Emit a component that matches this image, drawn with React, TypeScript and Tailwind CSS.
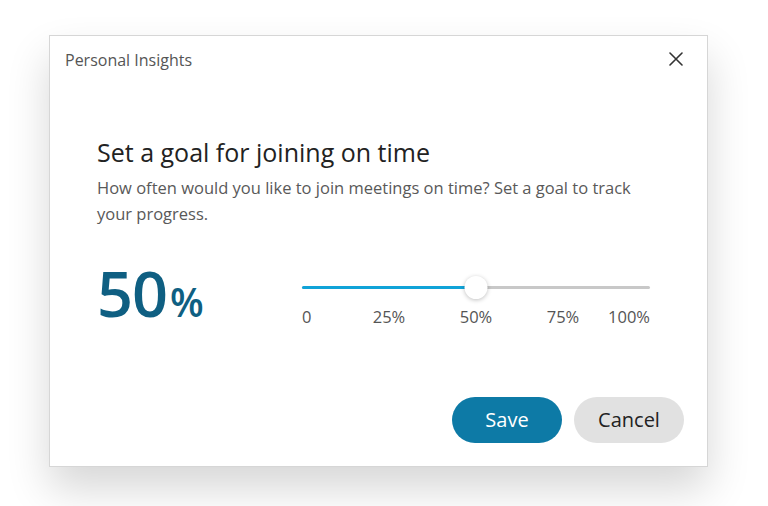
import React from "react";

export default function App() {
  const font = { fontFamily: '"Open Sans", "Noto Sans", sans-serif' };
  const ticks = [
    { label: "0", pos: "left-0", tx: "" },
    { label: "25%", pos: "left-[25%]", tx: "-translate-x-1/2" },
    { label: "50%", pos: "left-[50%]", tx: "-translate-x-1/2" },
    { label: "75%", pos: "left-[75%]", tx: "-translate-x-1/2" },
    { label: "100%", pos: "right-0", tx: "" },
  ];
  return (
    <div className="w-[768px] h-[506px] bg-white overflow-hidden pl-[49px] pt-[35px]" style={font}>
      <div className="relative w-[659px] h-[432px] bg-white border border-[#d6d6d6] shadow-[0_22px_40px_rgba(0,0,0,0.16)] flex flex-col">
        <div className="flex items-center justify-between pl-[15px] pr-[24px] pt-[12px]">
          <span className="text-[16px] leading-[24px] text-[#555555]">Personal Insights</span>
          <svg width="14" height="14" viewBox="0 0 14 14" className="mt-[-3px]">
            <path d="M1 1 L13 13 M13 1 L1 13" stroke="#333" strokeWidth="1.6" strokeLinecap="round" />
          </svg>
        </div>
        <div className="pl-[47px] pr-[40px]">
          <h1 className="mt-[64px] text-[25px] leading-[32px] text-[#222222]">
            Set a goal for joining on time
          </h1>
          <p className="mt-[7px] text-[16.5px] leading-[26px] text-[#595959] w-[548px]">
            How often would you like to join meetings on time? Set a goal to track your progress.
          </p>
          <div className="flex items-start mt-[30px]">
            <div className="w-[205px] flex items-baseline text-[#0f5f82] font-semibold">
              <span className="text-[63px] leading-[72px] tracking-[-1px]">50</span>
              <span className="text-[39px] leading-[40px] ml-[3px]">%</span>
            </div>
            <div className="w-[348px] pt-[29px]">
              <div className="relative h-[3px] rounded-full bg-[#c8c8c8]">
                <div className="absolute left-0 top-0 h-[3px] w-[50%] rounded-full bg-[#10a3d8]" />
                <div className="absolute left-[50%] top-[-10px] w-[23px] h-[23px] -translate-x-1/2 rounded-full bg-white shadow-[0_1px_4px_rgba(0,0,0,0.25)]" />
              </div>
              <div className="relative h-[24px] mt-[16px] text-[16.5px] leading-[24px] text-[#555555]">
                {ticks.map((t) => (
                  <span key={t.label} className={`absolute top-0 ${t.pos} ${t.tx}`}>
                    {t.label}
                  </span>
                ))}
              </div>
            </div>
          </div>
        </div>
        <div className="mt-auto flex justify-end gap-[12px] pr-[23px] pb-[23px]">
          <button className="w-[110px] h-[46px] rounded-full bg-[#0d7aa6] text-white text-[20px]">Save</button>
          <button className="w-[110px] h-[46px] rounded-full bg-[#e1e1e1] text-[#222222] text-[20px]">Cancel</button>
        </div>
      </div>
    </div>
  );
}
